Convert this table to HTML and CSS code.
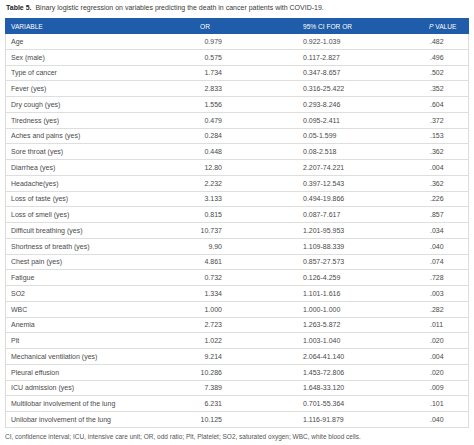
FILE: index.html
```html
<!DOCTYPE html>
<html>
<head>
<meta charset="utf-8">
<link rel="stylesheet" href="styles.css">
</head>
<body>
<div class="page">
  <div class="caption"><b>Table 5.</b>&nbsp; Binary logistic regression on variables predicting the death in cancer patients with COVID-19.</div>
  <div class="table">
    <div class="row head"><div>VARIABLE</div><div class="h-or">OR</div><div>95% CI FOR OR</div><div><i>P</i> VALUE</div></div>
    <div class="row"><div>Age</div><div class="or">0.979</div><div>0.922-1.039</div><div>.482</div></div>
    <div class="row"><div>Sex (male)</div><div class="or">0.575</div><div>0.117-2.827</div><div>.496</div></div>
    <div class="row"><div>Type of cancer</div><div class="or">1.734</div><div>0.347-8.657</div><div>.502</div></div>
    <div class="row"><div>Fever (yes)</div><div class="or">2.833</div><div>0.316-25.422</div><div>.352</div></div>
    <div class="row"><div>Dry cough (yes)</div><div class="or">1.556</div><div>0.293-8.246</div><div>.604</div></div>
    <div class="row"><div>Tiredness (yes)</div><div class="or">0.479</div><div>0.095-2.411</div><div>.372</div></div>
    <div class="row"><div>Aches and pains (yes)</div><div class="or">0.284</div><div>0.05-1.599</div><div>.153</div></div>
    <div class="row"><div>Sore throat (yes)</div><div class="or">0.448</div><div>0.08-2.518</div><div>.362</div></div>
    <div class="row"><div>Diarrhea (yes)</div><div class="or">12.80</div><div>2.207-74.221</div><div>.004</div></div>
    <div class="row"><div>Headache(yes)</div><div class="or">2.232</div><div>0.397-12.543</div><div>.362</div></div>
    <div class="row"><div>Loss of taste (yes)</div><div class="or">3.133</div><div>0.494-19.866</div><div>.226</div></div>
    <div class="row"><div>Loss of smell (yes)</div><div class="or">0.815</div><div>0.087-7.617</div><div>.857</div></div>
    <div class="row"><div>Difficult breathing (yes)</div><div class="or">10.737</div><div>1.201-95.953</div><div>.034</div></div>
    <div class="row"><div>Shortness of breath (yes)</div><div class="or">9.90</div><div>1.109-88.339</div><div>.040</div></div>
    <div class="row"><div>Chest pain (yes)</div><div class="or">4.861</div><div>0.857-27.573</div><div>.074</div></div>
    <div class="row"><div>Fatigue</div><div class="or">0.732</div><div>0.126-4.259</div><div>.728</div></div>
    <div class="row"><div>SO2</div><div class="or">1.334</div><div>1.101-1.616</div><div>.003</div></div>
    <div class="row"><div>WBC</div><div class="or">1.000</div><div>1.000-1.000</div><div>.282</div></div>
    <div class="row"><div>Anemia</div><div class="or">2.723</div><div>1.263-5.872</div><div>.011</div></div>
    <div class="row"><div>Plt</div><div class="or">1.022</div><div>1.003-1.040</div><div>.020</div></div>
    <div class="row"><div>Mechanical ventilation (yes)</div><div class="or">9.214</div><div>2.064-41.140</div><div>.004</div></div>
    <div class="row"><div>Pleural effusion</div><div class="or">10.286</div><div>1.453-72.806</div><div>.020</div></div>
    <div class="row"><div>ICU admission (yes)</div><div class="or">7.389</div><div>1.648-33.120</div><div>.009</div></div>
    <div class="row"><div>Multilobar involvement of the lung</div><div class="or">6.231</div><div>0.701-55.364</div><div>.101</div></div>
    <div class="row"><div>Unilobar involvement of the lung</div><div class="or">10.125</div><div>1.116-91.879</div><div>.040</div></div>
  </div>
  <div class="foot">CI, confidence interval; ICU, intensive care unit; OR, odd ratio; Plt, Platelet; SO2, saturated oxygen; WBC, white blood cells.</div>
</div>
</body>
</html>
```
FILE: styles.css
```css
html, body {
  margin: 0;
  padding: 0;
  background: #ffffff;
}
.page {
  width: 464px;
  padding: 3px 5px 0 5px;
  font-family: "Liberation Sans", Arial, sans-serif;
  color: #4a4a4a;
}
.caption {
  font-size: 7px;
  line-height: 10px;
  height: 10px;
  padding-left: 1px;
  color: #3a3a3a;
}
.caption b {
  color: #222;
}
.table {
  margin-top: 5px;
  border-left: 1px solid #dcdcdc;
  border-right: 1px solid #dcdcdc;
}
.row {
  display: grid;
  grid-template-columns: 188px 104px 126px 1fr;
  height: 15.76px;
  box-sizing: border-box;
  border-bottom: 1px solid #dedede;
  align-items: center;
  font-size: 7px;
}
.row > div {
  padding-left: 5px;
  white-space: nowrap;
}
.row > .or {
  text-align: right;
  padding-right: 76px;
  padding-left: 0;
}
.row > div:nth-child(4) {
  padding-left: 6px;
}
.row.head {
  height: 16px;
  background: #1f5ca9;
  color: #ffffff;
  font-size: 6.6px;
  border-bottom: none;
  margin: 0 -1px;
  padding: 0 1px;
}
.row.head > .h-or {
  padding-left: 6px;
}
.row.head > div:nth-child(4) {
  padding-left: 5px;
}
.foot {
  font-size: 6.5px;
  line-height: 10px;
  margin-top: 4px;
  color: #555;
}
```
